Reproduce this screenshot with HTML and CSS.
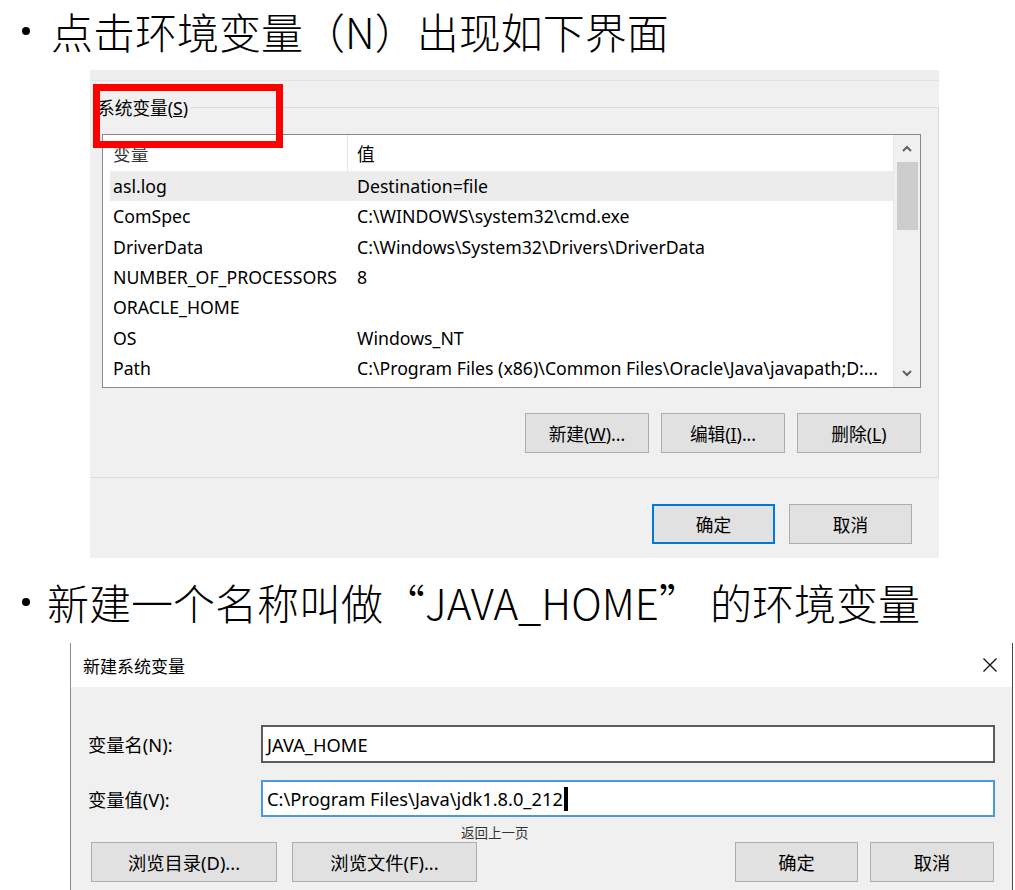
FILE: index.html
```html
<!DOCTYPE html>
<html lang="zh-CN">
<head>
<meta charset="utf-8">
<title>环境变量</title>
<link rel="stylesheet" href="styles.css">
</head>
<body>
<div class="page">
  <div class="bullet b1"><span class="dot"></span><span class="btext">点击环境变量（N）出现如下界面</span></div>

  <div class="shot1">
    <div class="strip"></div>
    <div class="group">
      <div class="group-label">系统变量(<u>S</u>)</div>
      <div class="listbox">
        <div class="list-main">
          <div class="lv-head"><div class="h1">变量</div><div class="h2">值</div></div>
          <div class="lv-row sel"><div class="c1">asl.log</div><div class="c2">Destination=file</div></div>
          <div class="lv-row"><div class="c1">ComSpec</div><div class="c2">C:\WINDOWS\system32\cmd.exe</div></div>
          <div class="lv-row"><div class="c1">DriverData</div><div class="c2">C:\Windows\System32\Drivers\DriverData</div></div>
          <div class="lv-row"><div class="c1">NUMBER_OF_PROCESSORS</div><div class="c2">8</div></div>
          <div class="lv-row"><div class="c1">ORACLE_HOME</div><div class="c2"></div></div>
          <div class="lv-row"><div class="c1">OS</div><div class="c2">Windows_NT</div></div>
          <div class="lv-row"><div class="c1">Path</div><div class="c2">C:\Program Files (x86)\Common Files\Oracle\Java\javapath;D:...</div></div>
        </div>
        <div class="vscroll">
          <div class="arrow"><svg width="10" height="7" viewBox="0 0 10 7"><polyline points="1,6 5,2 9,6" fill="none" stroke="#606060" stroke-width="2"/></svg></div>
          <div class="thumb"></div>
          <div class="track"></div>
          <div class="arrow"><svg width="10" height="7" viewBox="0 0 10 7"><polyline points="1,1 5,5 9,1" fill="none" stroke="#606060" stroke-width="2"/></svg></div>
        </div>
      </div>
      <div class="btn-row">
        <button class="btn">新建(<u>W</u>)...</button>
        <button class="btn">编辑(<u>I</u>)...</button>
        <button class="btn">删除(<u>L</u>)</button>
      </div>
    </div>
    <div class="footer-row">
      <button class="btn primary">确定</button>
      <button class="btn">取消</button>
    </div>
    <div class="redbox"></div>
  </div>

  <div class="bullet b2"><span class="dot"></span><span class="btext">新建一个名称叫做“JAVA_HOME” 的环境变量</span></div>

  <div class="dialog">
    <div class="titlebar">
      <span class="title">新建系统变量</span>
      <svg class="close" width="16" height="16" viewBox="0 0 16 16"><path d="M1.5 1.5 L14.5 14.5 M14.5 1.5 L1.5 14.5" stroke="#111" stroke-width="1.3" fill="none"/></svg>
    </div>
    <div class="dbody">
      <div class="frow">
        <div class="flabel">变量名(N):</div>
        <div class="field">JAVA_HOME</div>
      </div>
      <div class="frow r2">
        <div class="flabel">变量值(V):</div>
        <div class="field focus">C:\Program Files\Java\jdk1.8.0_212<span class="caret"></span></div>
      </div>
      <div class="dbtns">
        <button class="btn w186">浏览目录(D)...</button>
        <button class="btn w185">浏览文件(F)...</button>
        <span class="grow"></span>
        <button class="btn w123">确定</button>
        <button class="btn w124">取消</button>
      </div>
      <div class="backlink">返回上一页</div>
    </div>
  </div>
</div>
</body>
</html>
```

FILE: styles.css
```css
html, body {
  margin: 0;
  padding: 0;
  background: #fff;
}
body {
  font-family: "Noto Sans", "Noto Sans CJK SC", sans-serif;
  color: #000;
}
.page {
  width: 1015px;
  height: 890px;
  overflow: hidden;
}

/* slide bullets */
.bullet {
  display: flex;
  align-items: center;
  height: 62px;
  font-family: "Noto Sans CJK SC", sans-serif;
  font-weight: 300;
  font-size: 42px;
  line-height: 62px;
  color: #000;
  white-space: nowrap;
}
.dot {
  flex: none;
  width: 8px;
  height: 8px;
  border-radius: 50%;
  background: #000;
  margin-left: 22px;
}
.b1 { padding-bottom: 8px; margin-top: -2px; padding-top: 2px; }
.b1 .btext { margin-left: 21px; }
.b2 { padding-top: 13px; padding-bottom: 10px; }
.b2 .btext { margin-left: 17px; }

/* screenshot 1 */
.shot1 {
  position: relative;
  margin-left: 90px;
  width: 849px;
  height: 488px;
  background: #f0f0f0;
  overflow: hidden;
  font-size: 17.7px;
}
.strip {
  height: 10px;
  border-bottom: 1px solid #e2e2e2;
  background: #eeeeee;
}
.group {
  margin-top: 26px;
  border: 1px solid #dcdcdc;
  border-left: none;
  padding: 0 17px 24px 12px;
}
.group-label {
  margin-top: -10px;
  margin-left: -12px;
  width: max-content;
  padding: 0 3px 0 7px;
  background: #f0f0f0;
  line-height: 20px;
  height: 20px;
}
.listbox {
  margin-top: 16px;
  height: 254px;
  box-sizing: border-box;
  border: 1px solid #868a91;
  background: #fff;
  display: flex;
}
.list-main {
  flex: 1;
  min-width: 0;
  padding-left: 7px;
  overflow: hidden;
}
.lv-head {
  height: 36px;
  display: flex;
  align-items: center;
}
.lv-head .h1 {
  width: 238px;
  box-sizing: border-box;
  height: 100%;
  padding-left: 3px;
  border-right: 1px solid #e5e5e5;
  display: flex;
  align-items: center;
  color: #333;
}
.lv-head .h2 {
  padding-left: 9px;
}
.lv-row {
  height: 30.3px;
  display: flex;
  align-items: center;
  white-space: nowrap;
}
.lv-row.sel {
  background: #ececec;
}
.c1 {
  flex: none;
  width: 244px;
  box-sizing: border-box;
  padding-left: 3px;
}
.c2 {
  padding-left: 3px;
}
.vscroll {
  flex: none;
  width: 27px;
  box-sizing: border-box;
  border-left: 1px solid #e6e6e6;
  background: #f0f0f0;
  display: flex;
  flex-direction: column;
  align-items: center;
}
.arrow {
  height: 27px;
  display: flex;
  align-items: center;
  justify-content: center;
}
.thumb {
  width: 21px;
  height: 68px;
  background: #cdcdcd;
}
.track { flex: 1; }

.btn-row {
  display: flex;
  justify-content: flex-end;
  gap: 12px;
  margin-top: 25px;
}
.btn {
  width: 124px;
  height: 40px;
  box-sizing: border-box;
  padding: 0;
  background: #e1e1e1;
  border: 1px solid #adadad;
  font-family: "Noto Sans", "Noto Sans CJK SC", sans-serif;
  font-size: inherit;
  color: #000;
}
.footer-row {
  display: flex;
  justify-content: flex-end;
  gap: 14px;
  margin-top: 26px;
  padding-right: 27px;
}
.footer-row .btn { width: 123px; }
.btn.primary {
  border: 2px solid #0078d7;
}
.redbox {
  position: absolute;
  left: 3px;
  top: 14px;
  width: 190px;
  height: 64px;
  box-sizing: border-box;
  border: 7px solid #ff0000;
}

/* screenshot 2 */
.dialog {
  margin-left: 70px;
  width: 943px;
  height: 247px;
  box-sizing: border-box;
  border-left: 1px solid #8c8c8c;
  border-right: 1px solid #4a4a4a;
  overflow: hidden;
  font-size: 18.3px;
}
.titlebar {
  height: 44px;
  background: #fff;
  display: flex;
  align-items: center;
  justify-content: space-between;
  padding: 0 14px 0 12px;
}
.title {
  font-family: "Noto Sans CJK SC", sans-serif;
  font-size: 17px;
}
.dbody {
  position: relative;
  height: 203px;
  box-sizing: border-box;
  background: #f0f0f0;
  padding: 38px 17px 0 17px;
}
.frow {
  display: flex;
  align-items: center;
}
.frow.r2 { margin-top: 17px; }
.flabel {
  flex: none;
  width: 173px;
}
.field {
  flex: 1;
  height: 38px;
  box-sizing: border-box;
  border: 2px solid #5c5c5c;
  background: #fff;
  padding-left: 4px;
  display: flex;
  align-items: center;
  white-space: nowrap;
}
.field.focus {
  height: 37px;
  border: 2px solid #4a98e2;
}
.caret {
  display: inline-block;
  width: 4px;
  height: 24px;
  background: #000;
  margin-left: 1px;
}
.dbtns {
  display: flex;
  margin: 25px 1px 0 3px;
  gap: 15px;
}
.dbtns .grow { flex: 1; }
.dbtns .w186 { width: 186px; }
.dbtns .w185 { width: 185px; }
.dbtns .w123 { width: 123px; }
.dbtns .w124 { width: 124px; margin-left: -3px; }
.backlink {
  position: absolute;
  left: 390px;
  top: 137px;
  font-family: "Noto Sans CJK SC", sans-serif;
  font-size: 13.5px;
  line-height: 16px;
  color: #333;
}
```
